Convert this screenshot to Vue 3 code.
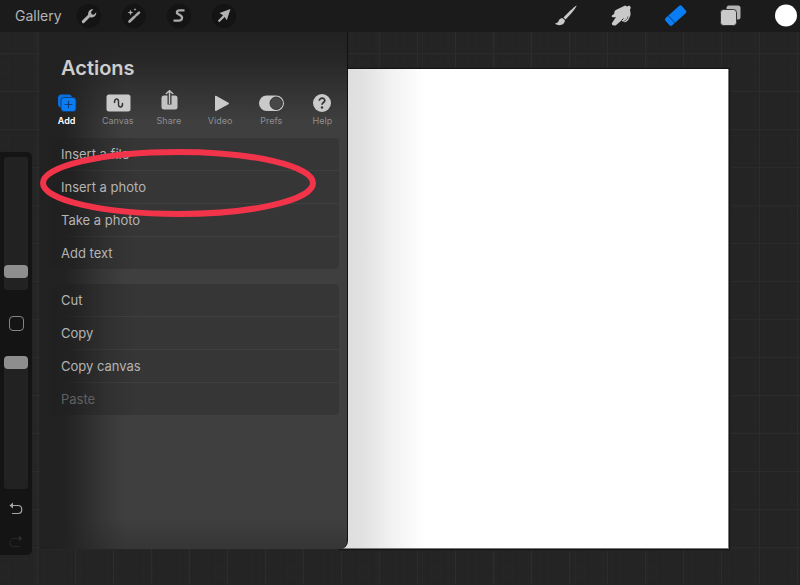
<script setup>
import { ref } from 'vue'

const tab = ref('Add')
const size = ref(10)
const opacity = ref(100)
const tabs = ['Add', 'Canvas', 'Share', 'Video', 'Prefs', 'Help']
const groups = [
  [
    { label: 'Insert a file' },
    { label: 'Insert a photo' },
    { label: 'Take a photo' },
    { label: 'Add text' },
  ],
  [
    { label: 'Cut' },
    { label: 'Copy' },
    { label: 'Copy canvas' },
    { label: 'Paste', disabled: true },
  ],
]
</script>

<template>
  <div class="app">
    <header class="topbar">
      <nav class="left">
        <a class="gallery" href="#">Gallery</a>
        <button class="round" aria-label="Actions">
          <svg viewBox="0 0 24 24" width="24" height="24">
            <path d="M6.300 17.600L13 11" stroke="#b2b2b2" stroke-width="3" stroke-linecap="round" />
            <path d="M11.300 11.200C10.500 7.800 12.800 5 16.300 5.300L14 7.900L14.500 10.300L16.900 10.700L19.200 8.300C19.500 11.800 16.500 14.200 13.200 13.200Z" fill="#b2b2b2" />
          </svg>
        </button>
        <button class="round" aria-label="Adjustments">
          <svg viewBox="0 0 24 24" width="24" height="24">
            <path d="M7.500 17.500L12.500 12.800M14 11.400L17 8.600" stroke="#aaa" stroke-width="2.600" stroke-linecap="round" />
            <path d="M8.500 5.500l.8 2.200 2.200.8-2.200.8-.8 2.200-.8-2.200L5.500 8.500l2.200-.8zM13 4l.4 1.100 1.100.4-1.100.4-.4 1.100-.4-1.100-1.100-.4 1.100-.4z" fill="#aaa" />
          </svg>
        </button>
        <button class="round" aria-label="Selection">
          <svg viewBox="0 0 24 24" width="24" height="24">
            <path d="M17.500 6.300H12.500C9.500 6.300 9 8.800 11.200 10L13.600 11.500C16.200 13.200 15 16.700 12 16.700H6.500" fill="none" stroke="#aaa" stroke-width="2.300" />
          </svg>
        </button>
        <button class="round" aria-label="Transform">
          <svg viewBox="0 0 24 24" width="24" height="24">
            <path d="M18.500 5L14.800 16.300L12.700 12.900L7.300 18.200L5.800 16.800L11.100 11.300L7.500 9.100Z" fill="#b2b2b2" />
          </svg>
        </button>
      </nav>
      <nav class="right">
        <button aria-label="Brush">
          <svg viewBox="0 0 24 24" width="24" height="24">
            <path d="M22.700 1.500C19.500 3.200 12.500 10 9.500 13.600L11.600 15.500C15 12 21.500 5 22.700 1.500Z" fill="#c9c9c9" />
            <path d="M8.800 14.300C6.500 13.700 5 15.300 4.600 17.100C4.200 18.700 2.300 19.400 .9 19.700C4.500 22.300 10.700 21.500 10.900 16.300Z" fill="#c9c9c9" />
          </svg>
        </button>
        <button aria-label="Smudge">
          <svg viewBox="0 0 24 24" width="24" height="24">
            <path d="M16 1.500L18 2.500L20.500 1.500L21.800 3.500L21 6L21.500 9C21.800 11 21 12.500 20.300 14C19.500 16.500 17.500 18.300 15.300 18.300C13.800 18.300 13.500 17 12.500 16.500L7.500 20.700C5.500 22.300 2 21.500 3 19L7 13C5 13.300 3 13.600 2.600 12.300C2.500 10.800 4.800 11 5.300 9.500C5 7.500 6.300 6 8.300 5.300L12 3.500Z" fill="#c9c9c9" />
            <path d="M14.300 17.500C16.500 17 19 14.500 19 12.500" fill="none" stroke="#4a4a4a" stroke-width="0.900" />
            <path d="M12.500 16.500L14.500 14.500" stroke="#1b1b1b" stroke-width="1" />
          </svg>
        </button>
        <button aria-label="Eraser">
          <svg viewBox="0 0 24 24" width="24" height="24">
            <g transform="rotate(-42 12 12)" fill="#0a7df5">
              <rect x="1" y="6.500" width="22" height="10" rx="2" />
              <path d="M6.500 6.500V16.500" stroke="#0b4a96" stroke-width="1" />
            </g>
          </svg>
        </button>
        <button aria-label="Layers">
          <svg viewBox="0 0 24 24" width="24" height="24">
            <rect x="7.500" y="1.500" width="14" height="14" rx="2.500" fill="#b3b3b3" />
            <rect x="1.500" y="5.500" width="16" height="16" rx="3" fill="#cacaca" stroke="#333" stroke-width="1" />
          </svg>
        </button>
        <button aria-label="Color">
          <svg viewBox="0 0 24 24" width="24" height="24">
            <circle cx="12" cy="11.500" r="11" fill="#fff" />
          </svg>
        </button>
      </nav>
    </header>

    <main class="workspace">
      <aside class="sidebar">
        <input v-model="size" type="range" aria-label="Brush size" />
        <button class="modify" aria-label="Modify"><span class="square"></span></button>
        <input v-model="opacity" type="range" aria-label="Brush opacity" />
        <button class="history" aria-label="Undo">
          <svg viewBox="0 0 16 16" width="16" height="16">
            <path d="M2.500 4.500H10C15 4.500 15 12.500 10 12.500H4" fill="none" stroke="#a6a6a6" stroke-width="1.200" />
            <path d="M5 1.500V7.500L1.500 4.500Z" fill="#a6a6a6" />
          </svg>
        </button>
        <button class="history" aria-label="Redo" disabled>
          <svg viewBox="0 0 16 16" width="16" height="16">
            <path d="M13.500 4.500H5C1 4.500 1 12.500 5 12.500H12" fill="none" stroke="#252525" stroke-width="1.200" />
            <path d="M11 1.500V7.500L14.500 4.500Z" fill="#2c2c2c" />
          </svg>
        </button>
      </aside>

      <section class="panel">
        <h1>Actions</h1>
        <div class="tabs">
          <button
            v-for="name in tabs"
            :key="name"
            class="tab"
            :class="{ active: tab === name }"
            @click="tab = name"
          >
            <svg viewBox="0 0 26 26" width="26" height="26">
              <template v-if="name === 'Add'">
                <rect x="4" y="4.500" width="14" height="13" rx="3.500" fill="#0a6fe0" />
                <rect x="7" y="7.500" width="15" height="14" rx="3" fill="#0a7df5" stroke="#114178" stroke-width="1" />
                <path d="M14.500 10.700V18.300M10.700 14.500H18.300" stroke="#123f77" stroke-width="1.200" />
              </template>
              <template v-else-if="name === 'Canvas'">
                <rect x="1.500" y="4.500" width="24" height="17" rx="2.500" fill="#cacaca" />
                <path d="M9.500 12.500C9.500 8 13.500 8 13.500 11.500V14.500C13.500 18 17.800 18 17.500 13.500" fill="none" stroke="#333" stroke-width="1.500" stroke-linecap="round" />
              </template>
              <template v-else-if="name === 'Share'">
                <rect x="5.500" y="5.500" width="16" height="14" rx="2.500" fill="#c3c3c3" />
                <path d="M13.500 14.500V1" stroke="#383838" stroke-width="4" />
                <path d="M13.500 14V1M9.800 4L13.500 0.700L17.200 4" fill="none" stroke="#c3c3c3" stroke-width="1.400" />
              </template>
              <path v-else-if="name === 'Video'" d="M8 6.500V20Q8 21.500 9.500 20.800L21.500 14.200Q22.500 13.500 21.500 12.800L9.500 6Q8 5.300 8 6.500Z" fill="#cacaca" />
              <template v-else-if="name === 'Prefs'">
                <rect x="1" y="5.500" width="25" height="15.500" rx="7.750" fill="#cacaca" />
                <circle cx="18.200" cy="13.250" r="6.200" fill="#484848" stroke="#333" stroke-width="1" />
              </template>
              <template v-else>
                <circle cx="13" cy="13" r="9" fill="#cacaca" />
                <path d="M10.300 10.800C10.300 7.200 16 7.500 15.800 10.700C15.600 12.500 13 12.700 13 14.800" fill="none" stroke="#333" stroke-width="1.700" />
                <circle cx="13" cy="17.500" r="1.200" fill="#333" />
              </template>
            </svg>
            <span>{{ name }}</span>
          </button>
        </div>
        <div v-for="(group, i) in groups" :key="i" class="group">
          <button v-for="item in group" :key="item.label" class="row" :disabled="item.disabled">
            {{ item.label }}
          </button>
        </div>
        <svg class="marker" viewBox="0 0 278 70" width="278" height="70">
          <ellipse cx="139" cy="35" rx="135" ry="31" fill="none" stroke="#f2344a" stroke-width="6" />
        </svg>
      </section>

      <div class="canvas"></div>
    </main>
  </div>
</template>

<style>
body {
  margin: 0;
  background: #242424;
}
</style>

<style scoped>
.app {
  display: flex;
  flex-direction: column;
  min-height: 100vh;
  font-family: Inter, "Liberation Sans", sans-serif;
  color: #b4b4b4;
}
button {
  display: flex;
  align-items: center;
  justify-content: center;
  padding: 0;
  border: 0;
  background: none;
  color: inherit;
  font: inherit;
}
svg {
  display: block;
}
.topbar {
  display: flex;
  justify-content: space-between;
  height: 32px;
  background: #1b1b1b;
}
.left,
.right {
  display: flex;
  align-items: center;
}
.left {
  gap: 21px;
  padding: 0 0 1px 15px;
}
.right {
  gap: 31px;
  padding-right: 2px;
}
.gallery {
  margin-right: -6px;
  color: #b4b4b4;
  font-size: 14px;
  text-decoration: none;
}
.round {
  width: 24px;
  height: 24px;
  border-radius: 50%;
  background: #141414;
}
.workspace {
  display: flex;
  flex: 1;
  padding: 0 71px 36px 0;
  background:
    repeating-linear-gradient(90deg, transparent 0 37px, #2c2c2c 37px 38px),
    repeating-linear-gradient(0deg, transparent 0 37px, #2b2b2b 37px 38px),
    repeating-linear-gradient(90deg, transparent 0 8px, #262626 8px 9px),
    repeating-linear-gradient(0deg, transparent 0 8px, #262626 8px 9px),
    #242424;
}
.sidebar {
  display: flex;
  flex-direction: column;
  align-items: center;
  align-self: flex-start;
  box-sizing: border-box;
  width: 32px;
  margin: 120px 8px -8px 0;
  padding: 5px 0 0;
  border-radius: 0 5px 5px 0;
  background: #141414;
}
.sidebar input {
  width: 24px;
  height: 133px;
  margin: 0;
  appearance: none;
  writing-mode: vertical-lr;
  direction: rtl;
  border-radius: 3px;
  background: #222;
}
.sidebar input::-webkit-slider-thumb {
  appearance: none;
  width: 24px;
  height: 13px;
  border-radius: 4px;
  background: #8e8e8e;
}
.modify {
  width: 32px;
  height: 66px;
}
.square {
  box-sizing: border-box;
  width: 15px;
  height: 15px;
  border: 1px solid #858585;
  border-radius: 4px;
}
.history {
  width: 32px;
  height: 33px;
  padding-top: 6px;
}
.panel {
  position: relative;
  box-sizing: border-box;
  flex: 0 0 308px;
  min-width: 0;
  margin-right: -8px;
  padding: 24px 8px 0 12px;
  border-right: 1px solid #111;
  border-radius: 0 0 8px 0;
  background:
    linear-gradient(180deg, #222222 0, #222222dd 25px, #22222200 90px),
    linear-gradient(0deg, #22222255 0, #22222200 30px),
    linear-gradient(90deg, #212121 0, #222 25px, #353535 60px, #3f3f3f 85px);
  z-index: 1;
}
h1 {
  margin: 0 0 0 9px;
  color: #cdcdcd;
  font-size: 20px;
  font-weight: 600;
  line-height: 24px;
}
.tabs {
  display: grid;
  grid-template-columns: repeat(6, minmax(0, 1fr));
  margin: 9px -9px 0 -11px;
}
.tab {
  flex-direction: column;
  color: #8e8e8e;
  font-size: 9px;
  line-height: 12px;
}
.tab svg {
  margin: 1px 0 -1px;
}
.active {
  color: #fff;
  font-weight: 600;
}
.group {
  display: grid;
  gap: 1px;
  margin: 11px 0 15px;
  border-radius: 4px;
  overflow: hidden;
}
.group + .group {
  margin-top: 0;
}
.row {
  justify-content: flex-start;
  height: 32px;
  padding-left: 9px;
  background: linear-gradient(90deg, #202020 0, #222 20px, #303030 55px, #363636 85px);
  color: #b4b4b4;
  font-size: 13px;
  text-align: left;
}
.row:disabled {
  color: #606060;
}
.marker {
  position: absolute;
  top: 116px;
  left: -1px;
  pointer-events: none;
}
.canvas {
  flex: 1;
  margin-top: 37px;
  border-right: 1px solid #777;
  border-bottom: 1px solid #777;
  box-sizing: border-box;
  background: linear-gradient(90deg, #dcdcdc 0, #e2e2e2 24px, #f2f2f2 52px, #fff 86px);
  box-shadow: 0 0 1px 1px #141414;
}
</style>
